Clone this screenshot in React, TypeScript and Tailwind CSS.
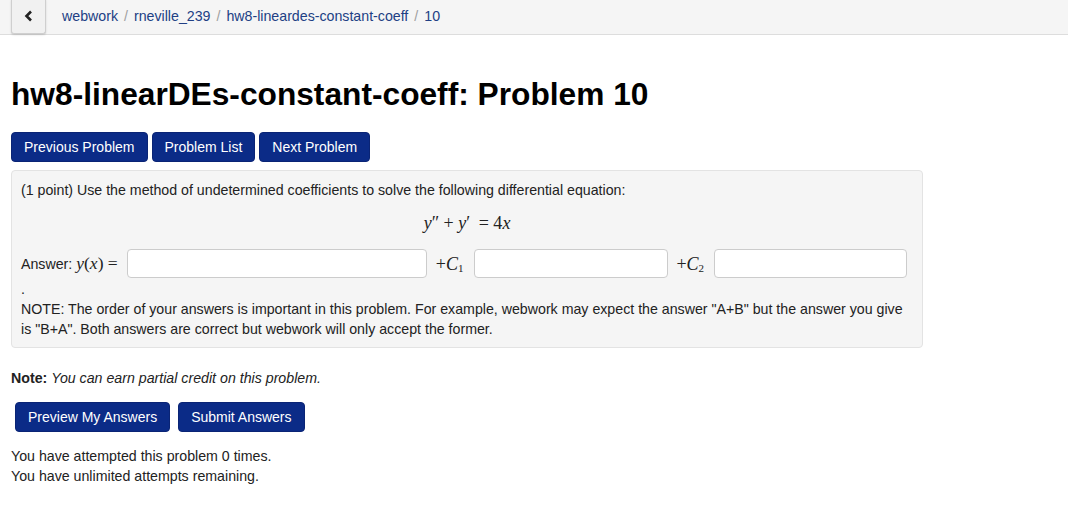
import React from 'react';

const sans = { fontFamily: '"Liberation Sans", Arial, sans-serif' };
const serif = { fontFamily: '"Liberation Serif", "Times New Roman", serif' };

const crumbs = ['webwork', 'rneville_239', 'hw8-lineardes-constant-coeff', '10'];

const NavButton: React.FC<{ label: string }> = ({ label }) => (
  <button className="h-[30px] px-[12px] rounded-[4px] bg-[#0b2b87] text-white text-[14px] leading-none border border-[#0a2475]">
    {label}
  </button>
);

const AnswerInput: React.FC<{ width: string }> = ({ width }) => (
  <input
    type="text"
    className={`${width} h-[29px] bg-white border border-[#cccccc] rounded-[4px] outline-none`}
  />
);

export default function App() {
  return (
    <div className="w-[1068px] h-[514px] bg-white text-[#222] text-[14.2px]" style={sans}>
      {/* breadcrumb bar */}
      <div className="h-[35px] bg-[#f5f5f5] border-b border-[#dddddd] flex items-center">
        <div className="ml-[11px] w-[35px] h-[35px] -mt-[1px] bg-[#f1f1f1] border border-[#cfcfcf] border-t-0 rounded-b-[3px] shadow-[0_1px_2px_rgba(0,0,0,0.15)] flex items-center justify-center">
          <svg width="10" height="12" viewBox="0 0 10 12">
            <path d="M7 1.5 L2.5 6 L7 10.5" fill="none" stroke="#222" strokeWidth="2.6" />
          </svg>
        </div>
        <nav className="ml-[16px] flex items-center text-[14.2px] text-[#213f84]">
          {crumbs.map((c, i) => (
            <React.Fragment key={c}>
              {i > 0 && <span className="text-[#a0a0a0] px-[6px]">/</span>}
              <span>{c}</span>
            </React.Fragment>
          ))}
        </nav>
      </div>

      <div className="px-[11px]">
        <h1 className="mt-[40px] text-[31.7px] leading-[38px] font-bold text-black">
          hw8-linearDEs-constant-coeff: Problem 10
        </h1>

        <div className="mt-[19px] flex gap-[4px]">
          <NavButton label="Previous Problem" />
          <NavButton label="Problem List" />
          <NavButton label="Next Problem" />
        </div>

        <div className="mt-[8px] w-[912px] bg-[#f5f5f5] border border-[#e3e3e3] rounded-[4px] px-[9px] pt-[9px] pb-[8px] leading-[20px]">
          <p>(1 point) Use the method of undetermined coefficients to solve the following differential equation:</p>
          <div className="mt-[10px] h-[26px] flex justify-center items-center text-[18px]" style={serif}>
            <span>
              <i>y</i>″ + <i>y</i>′ <span className="ml-[4px]">= 4</span><i>x</i>
            </span>
          </div>
          <div className="mt-[13px] h-[29px] flex items-center">
            <span>Answer: </span>
            <span className="ml-[4px] mr-[9px] text-[17.5px] leading-none" style={serif}>
              <i>y</i>(<i>x</i>) =
            </span>
            <AnswerInput width="w-[300px]" />
            <span className="ml-[9px] mr-[11px] text-[18px] leading-none" style={serif}>
              +<i>C</i><sub className="text-[11px] leading-none">1</sub>
            </span>
            <AnswerInput width="w-[194px]" />
            <span className="ml-[8px] mr-[10px] text-[18px] leading-none" style={serif}>
              +<i>C</i><sub className="text-[11px] leading-none">2</sub>
            </span>
            <AnswerInput width="w-[193px]" />
          </div>
          <p className="mt-[1px]">.</p>
          <p className="pr-[4px]">
            NOTE: The order of your answers is important in this problem. For example, webwork may expect the answer "A+B" but the answer you give is "B+A". Both answers are correct but webwork will only accept the former.
          </p>
        </div>

        <p className="mt-[20px] leading-[20px]">
          <b>Note:</b> <i>You can earn partial credit on this problem.</i>
        </p>

        <div className="mt-[14px] ml-[4px] flex gap-[8px]">
          <NavButton label="Preview My Answers" />
          <NavButton label="Submit Answers" />
        </div>

        <div className="mt-[14px] leading-[20px]">
          <p>You have attempted this problem 0 times.</p>
          <p>You have unlimited attempts remaining.</p>
        </div>
      </div>
    </div>
  );
}
